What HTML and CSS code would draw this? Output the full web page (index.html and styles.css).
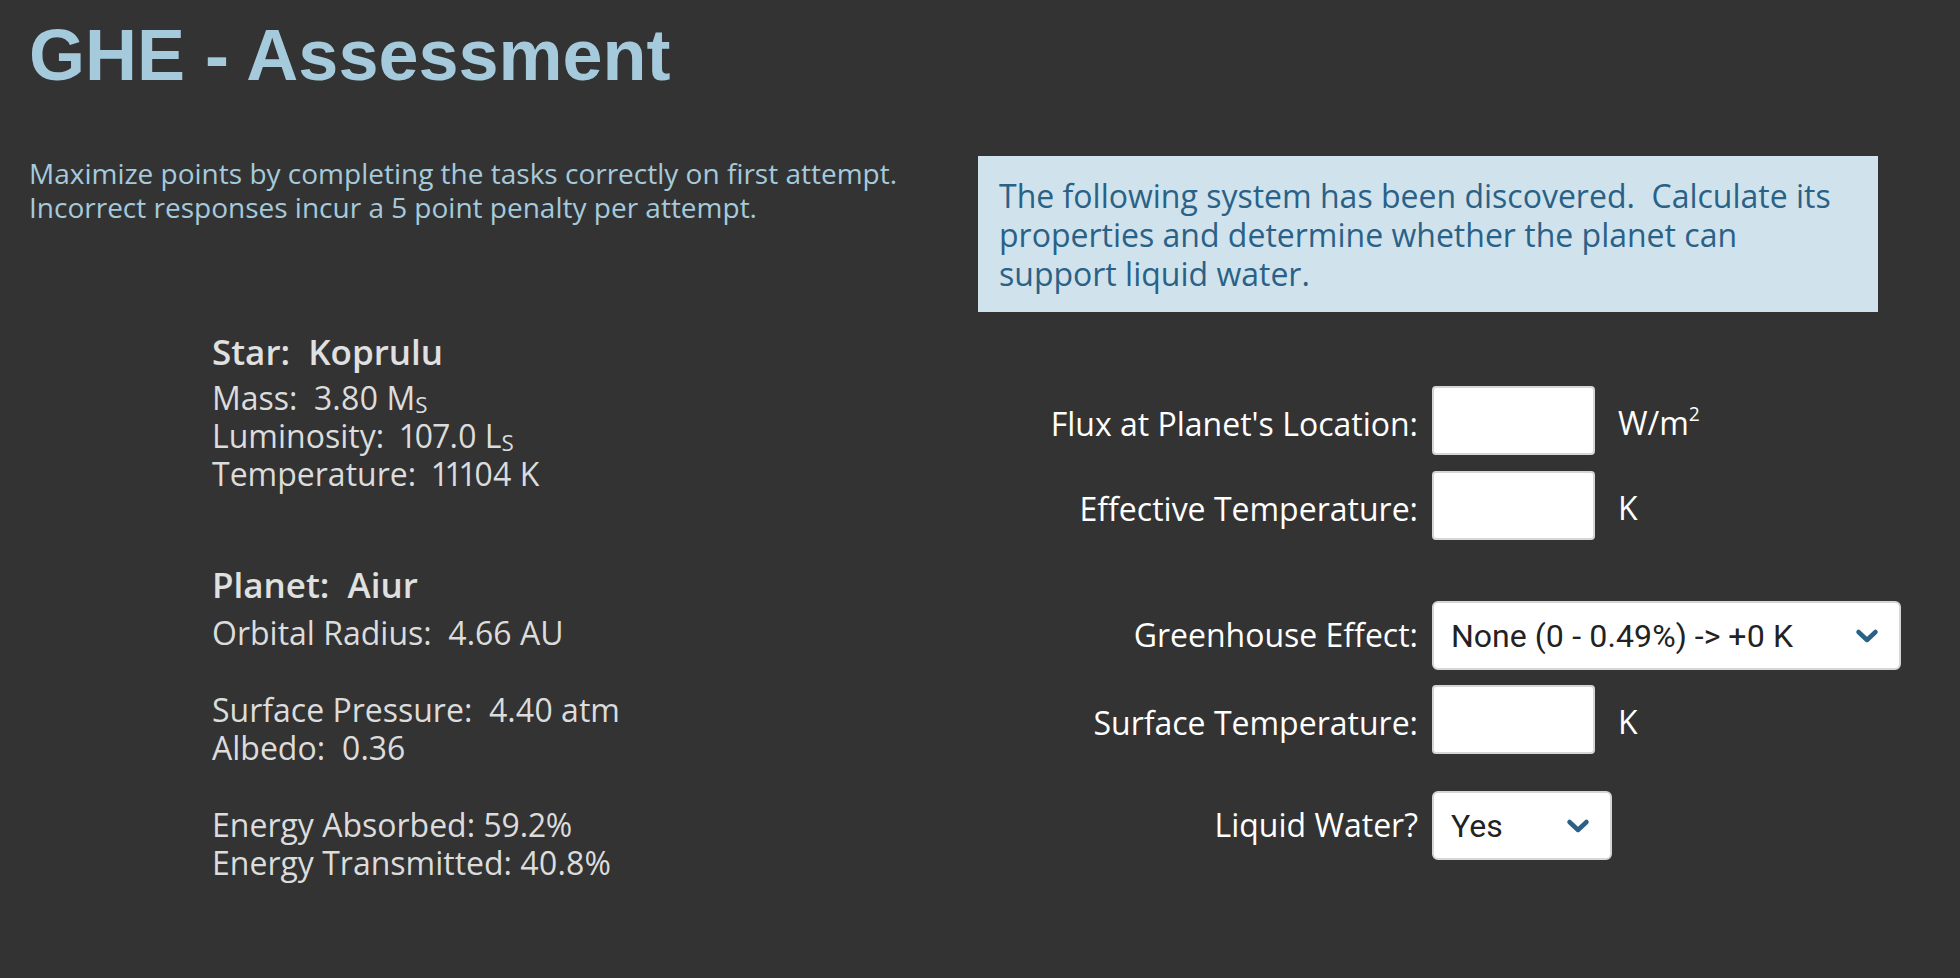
FILE: index.html
```html
<!DOCTYPE html>
<html>
<head>
<meta charset="utf-8">
<link rel="stylesheet" href="styles.css">
</head>
<body>
<h1 class="title">GHE - Assessment</h1>
<div class="main">
  <div class="left">
    <p class="instructions">Maximize points by completing the tasks correctly on first attempt.<br>Incorrect responses incur a 5 point penalty per attempt.</p>
    <div class="data">
      <div class="group">
        <div class="head">Star:&nbsp; Koprulu</div>
        <div class="line">Mass:&nbsp; 3.80 M<sub>S</sub></div>
        <div class="line">Luminosity:&nbsp; 107.0 L<sub>S</sub></div>
        <div class="line">Temperature:&nbsp; 11104 K</div>
      </div>
      <div class="group planet">
        <div class="head">Planet:&nbsp; Aiur</div>
        <div class="line">Orbital Radius:&nbsp; 4.66 AU</div>
        <div class="line gap">Surface Pressure:&nbsp; 4.40 atm</div>
        <div class="line">Albedo:&nbsp; 0.36</div>
        <div class="line gap">Energy Absorbed: 59.2%</div>
        <div class="line">Energy Transmitted: 40.8%</div>
      </div>
    </div>
  </div>
  <div class="right">
    <div class="box">The following system has been discovered.&nbsp; Calculate its properties and determine whether the planet can support liquid water.</div>
    <div class="form">
      <div class="row r-flux">
        <label class="lbl">Flux at Planet's Location:</label>
        <div class="input"></div>
        <span class="unit">W/m<sup>2</sup></span>
      </div>
      <div class="row r-eff">
        <label class="lbl">Effective Temperature:</label>
        <div class="input"></div>
        <span class="unit">K</span>
      </div>
      <div class="row sel-row r-gh">
        <label class="lbl">Greenhouse Effect:</label>
        <div class="select wide"><span>None (0 - 0.49%) -&gt; +0 K</span>
          <svg class="chev" width="24" height="16" viewBox="0 0 24 16"><path d="M3.5 4 L12 12 L20.5 4" fill="none" stroke="#2a6186" stroke-width="4.5" stroke-linecap="round" stroke-linejoin="round"/></svg>
        </div>
      </div>
      <div class="row r-surf">
        <label class="lbl">Surface Temperature:</label>
        <div class="input"></div>
        <span class="unit">K</span>
      </div>
      <div class="row sel-row r-water">
        <label class="lbl">Liquid Water?</label>
        <div class="select small"><span>Yes</span>
          <svg class="chev" width="24" height="16" viewBox="0 0 24 16"><path d="M3.5 4 L12 12 L20.5 4" fill="none" stroke="#2a6186" stroke-width="4.5" stroke-linecap="round" stroke-linejoin="round"/></svg>
        </div>
      </div>
    </div>
  </div>
</div>
</body>
</html>
```
FILE: styles.css
```css
html, body {
  margin: 0;
  padding: 0;
  background: #333333;
  width: 1960px;
  height: 978px;
  overflow: hidden;
}
body {
  font-family: "Open Sans", "DejaVu Sans", sans-serif;
  font-variant-numeric: proportional-nums;
}
.title {
  margin: 0;
  padding: 14px 0 0 29px;
  font-family: "Liberation Sans", Arial, sans-serif;
  font-weight: bold;
  font-size: 72px;
  line-height: 82px;
  color: #a5cadc;
}
.main {
  display: flex;
  margin-top: 60px;
}
.left {
  width: 978px;
  flex: none;
}
.instructions {
  margin: 0;
  padding: 0 0 0 29px;
  font-size: 28px;
  line-height: 34px;
  color: #a5cadc;
}
.data {
  padding-left: 212px;
  margin-top: 102px;
  color: #dcdcdc;
  font-size: 32px;
  line-height: 38px;
}
.group.planet { margin-top: 66px; }
.head {
  font-size: 35px;
  font-weight: 600;
  line-height: 51px;
  margin-bottom: 2px;
  color: #e0e0e0;
}
.planet .head { margin-bottom: 4px; }
.planet .line.gap { margin-top: 39px; }
.line.gap { margin-top: 38px; }
sub {
  font-size: 0.7em;
  vertical-align: -0.15em;
  line-height: 0;
}
.right {
  flex: none;
  width: 940px;
}
.box {
  width: 900px;
  box-sizing: border-box;
  background: #d0e3ed;
  color: #2a6186;
  font-size: 32px;
  line-height: 39px;
  padding: 20px 40px 19px 21px;
}
.form {
  margin-top: 74px;
}
.row {
  display: flex;
  align-items: center;
}
.row.sel-row {
  align-items: baseline;
}
.lbl {
  width: 440px;
  text-align: right;
  margin-right: 14px;
  padding-top: 6px;
  color: #ffffff;
  font-size: 32px;
}
.sel-row .lbl {
  padding-top: 0;
}
.input {
  width: 163px;
  height: 69px;
  box-sizing: border-box;
  background: #ffffff;
  border: 2px solid #d6d6d6;
  border-radius: 4px;
}
.unit {
  margin-left: 23px;
  padding-top: 4px;
  color: #ffffff;
  font-size: 32px;
}
sup {
  font-size: 0.6em;
  vertical-align: 0.75em;
  line-height: 0;
}
.select {
  height: 69px;
  box-sizing: border-box;
  background: #ffffff;
  border: 2px solid #d6d6d6;
  border-radius: 6px;
  display: flex;
  align-items: center;
  justify-content: space-between;
  padding: 0 20px 0 17px;
  color: #222222;
  font-family: Roboto, "Liberation Sans", sans-serif;
  font-size: 32px;
}
.select.wide { width: 469px; }
.select.small { width: 180px; }
.r-eff { margin-top: 16px; }
.r-gh { margin-top: 61px; }
.r-surf { margin-top: 15px; }
.r-water { margin-top: 37px; }
```
